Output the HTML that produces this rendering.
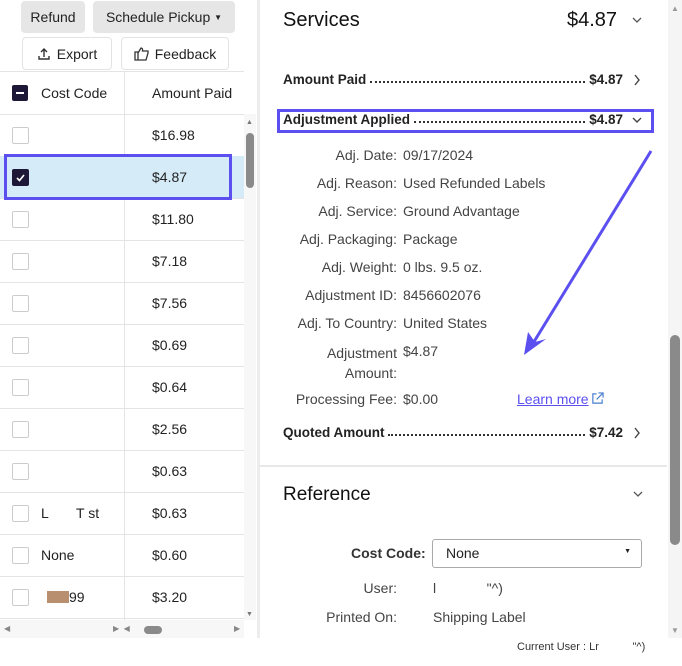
<!DOCTYPE html>
<html><head><style>
body{margin:0;width:682px;height:666px;position:relative;overflow:hidden;background:#fff;font-family:"Liberation Sans",sans-serif;color:#222;font-size:14px}
.a{position:absolute;white-space:nowrap}
.btn{position:absolute;border-radius:4px;font-size:14px;display:flex;align-items:center;justify-content:center}
.g{background:#e6e6e6}
.w{background:#fff;border:1px solid #e3e3e3}
.row{position:absolute;left:0;width:244px;height:42px;border-bottom:1px solid #e4e4e4}
.cb{position:absolute;left:12px;top:13px;width:15px;height:15px;border:1px solid #ccc;border-radius:2px;background:#fff}
.cc{position:absolute;left:41px;top:13px}
.am{position:absolute;left:152px;top:13px}
.lab{position:absolute;right:285px;text-align:right;color:#444}
.val{position:absolute;left:403px;color:#444}
.dl{position:absolute;left:283px;width:340px;font-weight:bold;font-size:13.5px;display:flex}
.dl .d{flex:1;border-bottom:2px dotted #333;margin:0 4px 4px}
.ch{position:absolute}
</style></head><body>
<div class="btn g" style="left:21px;top:1px;width:64px;height:32px">Refund</div>
<div class="btn g" style="left:93px;top:1px;width:142px;height:32px">Schedule Pickup&nbsp;<span style="font-size:8px">▼</span></div>
<div class="btn w" style="left:22px;top:37px;width:88px;height:31px"><svg width="14" height="14" viewBox="0 0 14 14" fill="none" stroke="#333" stroke-width="1.4" style="margin-right:6px"><path d="M7 10V2M4 5l3-3 3 3M2 9v3h10V9"/></svg>Export</div>
<div class="btn w" style="left:121px;top:37px;width:106px;height:31px"><svg width="16" height="15" viewBox="0 0 16 15" fill="none" stroke="#333" stroke-width="1.3" style="margin-right:5px"><path d="M1 6h3v8H1zM4 7l3-5c1 0 2 1 1.5 3H14v2l-2 7H4"/></svg>Feedback</div>
<div class="a" style="left:0;top:71px;width:244px;height:42px;border-top:1px solid #e4e4e4;border-bottom:1px solid #e4e4e4"></div>
<div class="a" style="left:12px;top:85px;width:16px;height:16px;background:#1d1838;border-radius:2px"><div style="position:absolute;left:4px;top:7px;width:8px;height:2px;background:#fff"></div></div>
<div class="a" style="left:41px;top:85px">Cost Code</div>
<div class="a" style="left:152px;top:85px">Amount Paid</div>
<div class="a" style="left:124px;top:72px;width:1px;height:566px;background:#e4e4e4"></div>
<div class="row" style="top:114px"><div class="cb"></div><div class="am">$16.98</div></div>
<div class="row" style="top:156px;background:#d5ebf8"><div class="cb" style="background:#1d1838;border-color:#1d1838"><svg width="15" height="15" viewBox="0 0 15 15" fill="none" stroke="#fff" stroke-width="1.6"><path d="M4 8l2.5 2.5L11 5"/></svg></div><div class="am">$4.87</div></div>
<div class="row" style="top:198px"><div class="cb"></div><div class="am">$11.80</div></div>
<div class="row" style="top:240px"><div class="cb"></div><div class="am">$7.18</div></div>
<div class="row" style="top:282px"><div class="cb"></div><div class="am">$7.56</div></div>
<div class="row" style="top:324px"><div class="cb"></div><div class="am">$0.69</div></div>
<div class="row" style="top:366px"><div class="cb"></div><div class="am">$0.64</div></div>
<div class="row" style="top:408px"><div class="cb"></div><div class="am">$2.56</div></div>
<div class="row" style="top:450px"><div class="cb"></div><div class="am">$0.63</div></div>
<div class="row" style="top:492px"><div class="cb"></div><div class="cc">L&nbsp;&nbsp;&nbsp;&nbsp;&nbsp;&nbsp;&nbsp;T st</div><div class="am">$0.63</div></div>
<div class="row" style="top:534px"><div class="cb"></div><div class="cc">None</div><div class="am">$0.60</div></div>
<div class="row" style="top:576px"><div class="cb"></div><div class="cc"><span style="display:inline-block;width:22px;height:12px;background:#b89070;margin-left:6px;vertical-align:-1px"></span>99</div><div class="am">$3.20</div></div>
<div class="a" style="left:4px;top:154px;width:222px;height:40px;border:3px solid #5b4ff0"></div>
<div class="a" style="left:244px;top:114px;width:12px;height:506px;background:#f7f7f7"></div>
<div class="a" style="left:246px;top:133px;width:8px;height:55px;background:#8a8a8a;border-radius:4px"></div>
<div class="a" style="left:246px;top:119px;font-size:7px;color:#777">▲</div>
<div class="a" style="left:246px;top:611px;font-size:7px;color:#777">▼</div>
<div class="a" style="left:0;top:620px;width:244px;height:18px;background:#f7f7f7"></div>
<div class="a" style="left:144px;top:626px;width:18px;height:8px;background:#8a8a8a;border-radius:4px"></div>
<div class="a" style="left:4px;top:624px;font-size:8px;color:#888">◀</div>
<div class="a" style="left:113px;top:624px;font-size:8px;color:#888">▶&nbsp;&nbsp;◀</div>
<div class="a" style="left:234px;top:624px;font-size:8px;color:#888">▶</div>
<div class="a" style="left:257px;top:0;width:3px;height:638px;background:#ececec"></div>
<div class="a" style="left:283px;top:9px;font-size:20px;color:#111">Services</div>
<div class="a" style="left:567px;top:9px;font-size:20px;color:#111">$4.87</div>
<svg class="ch" style="left:632px;top:16px" width="10" height="8"><path d="M1 2l4 4 4-4" fill="none" stroke="#555" stroke-width="1.3"/></svg>
<div class="dl" style="top:72px">Amount Paid<span class="d"></span>$4.87</div>
<svg class="ch" style="left:633px;top:74px" width="8" height="12"><path d="M2 1l4 5-4 5" fill="none" stroke="#444" stroke-width="1.4"/></svg>
<div class="dl" style="top:112px">Adjustment Applied<span class="d"></span>$4.87</div>
<svg class="ch" style="left:632px;top:116px" width="10" height="8"><path d="M1 2l4 4 4-4" fill="none" stroke="#444" stroke-width="1.4"/></svg>
<div class="a" style="left:277px;top:109px;width:371px;height:18px;border:3px solid #5b4ff0"></div>
<div class="lab" style="top:147px">Adj. Date:</div><div class="val" style="top:147px">09/17/2024</div>
<div class="lab" style="top:175px">Adj. Reason:</div><div class="val" style="top:175px">Used Refunded Labels</div>
<div class="lab" style="top:203px">Adj. Service:</div><div class="val" style="top:203px">Ground Advantage</div>
<div class="lab" style="top:231px">Adj. Packaging:</div><div class="val" style="top:231px">Package</div>
<div class="lab" style="top:259px">Adj. Weight:</div><div class="val" style="top:259px">0 lbs. 9.5 oz.</div>
<div class="lab" style="top:287px">Adjustment ID:</div><div class="val" style="top:287px">8456602076</div>
<div class="lab" style="top:315px">Adj. To Country:</div><div class="val" style="top:315px">United States</div>
<div class="lab" style="top:343px;line-height:20px">Adjustment<br>Amount:</div><div class="val" style="top:343px">$4.87</div>
<div class="lab" style="top:391px">Processing Fee:</div><div class="val" style="top:391px">$0.00</div>
<div class="a" style="left:517px;top:391px;color:#5b4ff0;text-decoration:underline">Learn more</div>
<svg class="a" style="left:591px;top:392px" width="13" height="13" viewBox="0 0 14 14" fill="none" stroke="#4a7fd0" stroke-width="1.3"><path d="M6 2H2v10h10V8M8 1h5v5M13 1L6 8"/></svg>
<div class="dl" style="top:425px">Quoted Amount<span class="d"></span>$7.42</div>
<svg class="ch" style="left:633px;top:427px" width="8" height="12"><path d="M2 1l4 5-4 5" fill="none" stroke="#444" stroke-width="1.4"/></svg>
<svg class="a" style="left:0;top:0" width="682" height="666"><path d="M651 151L532 345" stroke="#5b4ff0" stroke-width="3"/><path d="M524 355L528 332L535 342L546 339Z" fill="#5b4ff0"/></svg>
<div class="a" style="left:260px;top:465px;width:407px;height:2px;background:#e8e8e8"></div>
<div class="a" style="left:283px;top:484px;font-size:19px;color:#111">Reference</div>
<svg class="ch" style="left:633px;top:490px" width="10" height="8"><path d="M1 2l4 4 4-4" fill="none" stroke="#555" stroke-width="1.3"/></svg>
<div class="a" style="left:351px;top:545px;font-weight:bold;color:#333">Cost Code:</div>
<div class="a" style="left:432px;top:539px;width:208px;height:27px;border:1px solid #aaa;border-radius:3px"><span style="position:absolute;left:13px;top:5px">None</span><span style="position:absolute;right:10px;top:8px;font-size:7px">▼</span></div>
<div class="lab" style="top:580px">User:</div><div class="a" style="left:433px;top:580px;color:#444">l&nbsp;&nbsp;&nbsp;&nbsp;&nbsp;&nbsp;&nbsp;&nbsp;&nbsp;&nbsp;&nbsp;&nbsp;&nbsp;"^)</div>
<div class="lab" style="top:609px">Printed On:</div><div class="a" style="left:433px;top:609px;color:#444">Shipping Label</div>
<div class="a" style="left:668px;top:0;width:14px;height:638px;background:#f5f5f5"></div>
<div class="a" style="left:670px;top:335px;width:10px;height:210px;background:#8a8a8a;border-radius:5px"></div>
<div class="a" style="left:671px;top:4px;font-size:8px;color:#999">▲</div>
<div class="a" style="left:671px;top:626px;font-size:8px;color:#999">▼</div>
<div class="a" style="left:517px;top:641px;font-size:11px;color:#333">Current User : Lr&nbsp;&nbsp;&nbsp;&nbsp;&nbsp;&nbsp;&nbsp;&nbsp;&nbsp;&nbsp;&nbsp;"^)</div>
</body></html>
